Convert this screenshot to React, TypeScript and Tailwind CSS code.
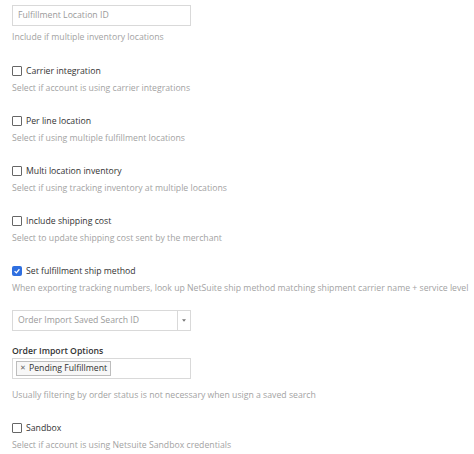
import React from 'react';

const font = { fontFamily: '"Open Sans", "Liberation Sans", sans-serif' };

const Checkbox = ({ checked }: { checked?: boolean }) =>
  checked ? (
    <span className="flex h-[10px] w-[10px] items-center justify-center rounded-[2px] bg-[#2f6fe0]">
      <svg viewBox="0 0 10 10" className="h-[8px] w-[8px]">
        <path d="M2 5.2 L4.2 7.3 L8 2.8" fill="none" stroke="#fff" strokeWidth="1.6" />
      </svg>
    </span>
  ) : (
    <span className="block h-[10px] w-[10px] rounded-[1px] border border-[#666] bg-white" />
  );

const CheckRow = ({ label, help, checked }: { label: string; help: string; checked?: boolean }) => (
  <div className="h-[50px] pt-[12px]">
    <div className="flex items-center gap-[4px] whitespace-nowrap text-[8.7px] leading-[16px] text-[#333]">
      <Checkbox checked={checked} />
      <span>{label}</span>
    </div>
    <div className="mt-[1px] whitespace-nowrap text-[8.7px] leading-[16px] text-[#a3a3a3]">{help}</div>
  </div>
);

export default function App() {
  return (
    <div className="h-[454px] w-[474px] overflow-hidden bg-white pl-[12px] pt-[5px]" style={font}>
      {/* location id */}
      <div className="h-[21px] w-[179px] border border-[#d9d9d9] px-[5px] text-[8.7px] leading-[19px] text-[#9a9a9a]">
        Fulfillment Location ID
      </div>
      <div className="mt-[3px] whitespace-nowrap text-[8.7px] leading-[16px] text-[#a3a3a3]">
        Include if multiple inventory locations
      </div>

      <div className="h-[6px]" />
      <CheckRow label="Carrier integration" help="Select if account is using carrier integrations" />
      <CheckRow label="Per line location" help="Select if using multiple fulfillment locations" />
      <CheckRow label="Multi location inventory" help="Select if using tracking inventory at multiple locations" />
      <CheckRow label="Include shipping cost" help="Select to update shipping cost sent by the merchant" />
      <CheckRow
        checked
        label="Set fulfillment ship method"
        help="When exporting tracking numbers, look up NetSuite ship method matching shipment carrier name + service level"
      />

      {/* saved search select */}
      <div className="mt-[9px] flex h-[21px] w-[179px] border border-[#d9d9d9] text-[8.7px] leading-[19px] text-[#9a9a9a]">
        <div className="flex-1 px-[5px]">Order Import Saved Search ID</div>
        <div className="flex w-[13px] items-center justify-center border-l border-[#d9d9d9]">
          <svg viewBox="0 0 6 4" className="h-[3px] w-[4px]">
            <path d="M0 0 H6 L3 4 Z" fill="#777" />
          </svg>
        </div>
      </div>

      <div className="mt-[13px] text-[8.7px] font-semibold leading-[14px] text-[#333]">Order Import Options</div>
      <div className="flex h-[21px] w-[179px] items-center border border-[#d9d9d9] px-[3px]">
        <span className="flex h-[15px] items-center gap-[3px] border border-[#bdbdbd] bg-[#f7f7f7] px-[3px] text-[8.7px] text-[#333]">
          <span className="text-[7px] text-[#666]">✕</span>
          Pending Fulfillment
        </span>
      </div>
      <div className="mt-[8px] whitespace-nowrap text-[8.7px] leading-[16px] text-[#a3a3a3]">
        Usually filtering by order status is not necessary when usign a saved search
      </div>

      <div className="h-[5px]" />
      <CheckRow label="Sandbox" help="Select if account is using Netsuite Sandbox credentials" />
    </div>
  );
}
